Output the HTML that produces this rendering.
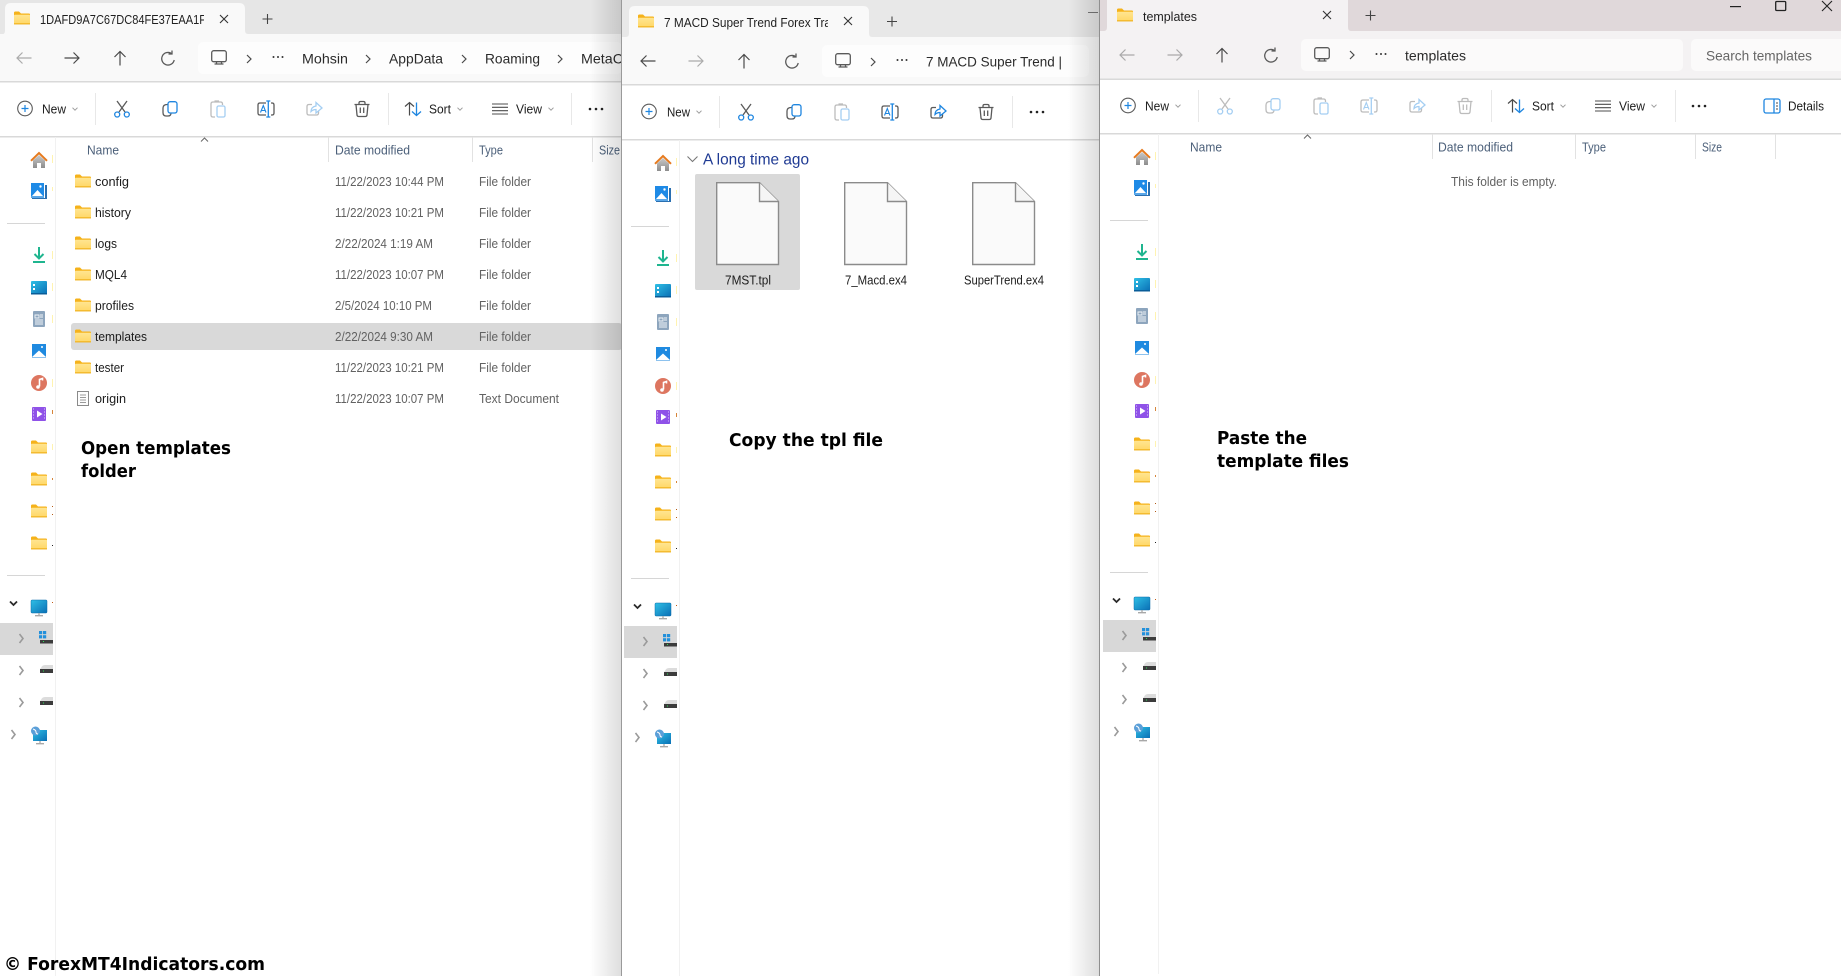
<!DOCTYPE html>
<html><head><meta charset="utf-8"><title>Explorer windows</title>
<style>
html,body{margin:0;padding:0;background:#fff;overflow:hidden}
svg{display:block}
text{font-family:"Liberation Sans",sans-serif;font-size:13px;fill:#1f1f1f}
.h{fill:#4c607a;font-size:12.5px}
.d{fill:#626262;font-size:12.5px}
.n{font-size:12.5px;fill:#1c1c1c}
.a{font-size:14px;fill:#2b2b2b}
.b{font-family:"DejaVu Sans",sans-serif;font-weight:bold;fill:#000;font-size:18px}
.s{fill:none;stroke:#4a4a4a;stroke-width:1.2}
.u{fill:none;stroke:#8a8a8a;stroke-width:1.2}
.bl{fill:none;stroke:#1f86e0;stroke-width:1.3}
.g{fill:none;stroke:#5a5a5a;stroke-width:1.3}
</style></head><body>
<svg width="1841" height="976" viewBox="0 0 1841 976" xmlns="http://www.w3.org/2000/svg">
<defs>
<linearGradient id="fd" x1="0" y1="0" x2="0" y2="1"><stop offset="0" stop-color="#ffe591"/><stop offset="1" stop-color="#ffd766"/></linearGradient>
<linearGradient id="sh" x1="0" y1="0" x2="1" y2="0"><stop offset="0" stop-color="#000" stop-opacity="0"/><stop offset="1" stop-color="#000" stop-opacity=".13"/></linearGradient>
<linearGradient id="sb" x1="0" y1="0" x2="1" y2="1"><stop offset="0" stop-color="#2fc0e6"/><stop offset="1" stop-color="#0a6fb5"/></linearGradient>
<linearGradient id="hb" x1="0" y1="0" x2="0" y2="1"><stop offset="0" stop-color="#c9c9c9"/><stop offset="1" stop-color="#8d8d8d"/></linearGradient>
<clipPath id="c1"><rect x="0" y="0" width="204" height="40"/></clipPath>
<clipPath id="c2"><rect x="620" y="0" width="208" height="40"/></clipPath>
<clipPath id="c3"><rect x="0" y="620" width="53" height="130"/></clipPath>

<g id="folder"><path d="M-8-3V-5.200q0-1.300 1.300-1.300H-3l2 2H7q1 0 1 1V-2H-8z" fill="#f5b21a"/><rect x="-8" y="-3.200" width="16" height="9.500" rx=".8" fill="url(#fd)"/><rect x="-8" y="5.300" width="16" height="1.100" fill="#efae18"/></g>

<g id="back"><path d="M7.500 0H-7M-1.500-5.500L-7 0l5.500 5.500" class="s"/></g>
<g id="backd"><path d="M7.500 0H-7M-1.500-5.500L-7 0l5.500 5.500" class="u" stroke-opacity=".7"/></g>
<g id="fwd"><path d="M-7.500 0H7M1.500-5.500L7 0l-5.500 5.500" class="s"/></g>
<g id="fwdd"><path d="M-7.500 0H7M1.500-5.500L7 0l-5.500 5.500" class="u" stroke-opacity=".7"/></g>
<g id="up"><path d="M0 7.500V-6.500M-5.500-1L0-6.500 5.500-1" class="s"/></g>
<g id="ref"><path d="M3.500-5.500A6.300 6.300 0 1 0 6.200 1M4-8.500v3.500H.5" class="g"/></g>
<g id="mon"><rect x="-7.300" y="-7.300" width="14.600" height="11" rx="2" class="g"/><path d="M-4.500 6h9M-2.500 4v2M2.500 4v2" class="g"/></g>
<g id="chev"><path d="M-2-4l4 4-4 4" class="s"/></g>
<g id="dots3"><circle cx="-4.500" r="1" fill="#333"/><circle r="1" fill="#333"/><circle cx="4.500" r="1" fill="#333"/></g>
<g id="more"><circle cx="-6" r="1.300" fill="#222"/><circle r="1.300" fill="#222"/><circle cx="6" r="1.300" fill="#222"/></g>
<g id="plus"><circle r="7.300" fill="none" stroke="#5a5a5a" stroke-width="1.100"/><path d="M-3.500 0h7M0-3.500v7" stroke="#1f86e0" stroke-width="1.200"/></g>
<g id="dn"><path d="M-2.500-1.300L0 1.200l2.500-2.500" fill="none" stroke="#9b9b9b" stroke-width="1"/></g>
<g id="cut"><path d="M-5-8L3 3M5-8L-3 3" class="g"/><circle cx="-4.800" cy="5.500" r="2.500" class="bl"/><circle cx="4.800" cy="5.500" r="2.500" class="bl"/></g>
<g id="copy"><path d="M-2.500-4.500Q-7-4.500-7-1v4.500q0 3.500 3 3.500h2q3 0 3-3" class="g"/><rect x="-2" y="-7.300" width="9" height="11.300" rx="2.200" class="bl"/></g>
<g id="paste"><path d="M-3 8h-2q-2 0-2-2V-5q0-2 2-2H2.500q2 0 2 2v1" class="g"/><path d="M-3.500-8h4.500" class="g"/><rect x="-1" y="-3" width="8" height="11" rx="1.500" class="bl"/></g>
<g id="ren"><path d="M0-6h-6q-2 0-2 2v8q0 2 2 2h6M5-6h1q2 0 2 2v8q0 2-2 2H5" class="g"/><path d="M2.300-8v16M.3-8h4M.3 8h4" class="bl"/><path d="M-5.500 3.500L-2.700-3.500 0 3.500M-4.700 1.500h4" stroke="#1f86e0" stroke-width="1.100" fill="none"/></g>
<g id="share"><path d="M-2-4.500h-3q-2 0-2 2V4q0 2 2 2h7.500q2 0 2-2V2" class="g"/><path d="M-3 2.500Q-3-2 2-3V-6.500L8-1 2 4V.5Q-1 .5-3 2.500z" class="bl"/></g>
<g id="del"><path d="M-7.500-4.500h15M-3-4.500V-6q0-1.500 1.500-1.500h3Q3-7.500 3-6v1.500M-6-4.500l1 10.500q.2 1.500 1.700 1.500h6.600q1.500 0 1.700-1.500l1-10.500M-1.700-1.500V4M1.700-1.500V4" class="g"/></g>
<g id="sort"><path d="M-3.500 6.500V-6.500M-8-2.500l4.500-4L1-2.500" class="s"/><path d="M3.500-6.500V6.500M-1 2.500l4.500 4 4.500-4" class="bl"/></g>
<g id="view"><path d="M-8-5h16M-8-1.700h16M-8 1.700h16M-8 5h16" stroke="#4d4d4d" stroke-width="1.100"/></g>
<g id="det"><rect x="-8" y="-7" width="16" height="14" rx="2" fill="none" stroke="#1f86e0" stroke-width="1.300"/><path d="M2-7V7" stroke="#1f86e0" stroke-width="1.300"/><path d="M4-3h2M4 0h2M4 3h2" stroke="#4a4a4a"/></g>

<g id="side">
<rect x="55" y="137" width="1" height="840" fill="#f1f1f1"/>
<rect x="0" y="623" width="53" height="32" fill="#d8d8d8"/>
<path d="M33 160.500l6-5.500 6 5.500V168h-4v-5h-4v5h-4z" fill="url(#hb)"/><path d="M31 160.800L39 153l8 7.800" fill="none" stroke="#e67a1e" stroke-width="2"/>
<rect x="31" y="183" width="13" height="13" fill="#1e8ae6"/><path d="M32 196l5.500-6 5.500 6z" fill="#fff"/><circle cx="40.500" cy="186.500" r="1.200" fill="#fff"/><rect x="31" y="196" width="13" height="2" fill="#5aa7e8"/><path d="M45 185h2v14H32v-1h13z" fill="#2a6fb0"/>
<rect x="7" y="223" width="38" height="1" fill="#d6d6d6"/>
<path d="M39 247v11M34.500 254l4.500 4.500 4.500-4.500M33 262h12" fill="none" stroke="#1fb58f" stroke-width="2"/>
<rect x="31" y="281" width="16" height="13" rx="1" fill="url(#sb)"/><rect x="33" y="284" width="2" height="2" fill="#fff"/><rect x="33" y="288" width="2" height="2" fill="#fff"/><rect x="31" y="293" width="16" height="1.500" fill="#0a5d98"/>
<rect x="33" y="311" width="12" height="16" rx="1" fill="#8da5bd"/><path d="M35 315h4v3h-4zM40 315h3M40 317h3M35 320h8M35 322h8M35 324h8" stroke="#f1f5f9" stroke-width=".9" fill="none"/>
<rect x="32" y="344" width="14" height="13" fill="#1f8ae0"/><path d="M32 357l7-6.500 7 6.500z" fill="#fff"/><circle cx="42" cy="347" r="1" fill="#fff"/><rect x="32" y="357" width="14" height="1" fill="#8dc2ee"/>
<circle cx="39" cy="383" r="8" fill="#dd7660"/><path d="M39.500 386.500v-7l3-1v2" stroke="#fff" stroke-width="1.600" fill="none"/><circle cx="38" cy="387" r="1.800" fill="#fff"/>
<rect x="32" y="407" width="14" height="14" rx="1" fill="#8f52e8"/><path d="M37 410.500v7l5.500-3.500z" fill="#fff"/><path d="M33 409h1M33 412h1M33 415h1M33 418h1M44 409h1M44 412h1M44 415h1M44 418h1" stroke="#fff" opacity=".7"/>
<use href="#folder" x="39" y="447"/><use href="#folder" x="39" y="479"/><use href="#folder" x="39" y="511"/><use href="#folder" x="39" y="543"/>
<rect x="7" y="575" width="38" height="1" fill="#d6d6d6"/>
<path d="M10 601.500l3.500 3.500 3.500-3.500" fill="none" stroke="#2a2a2a" stroke-width="1.800"/>
<rect x="31" y="600" width="16" height="13" rx="1" fill="url(#sb)" stroke="#0a6aa8" stroke-width=".5"/><path d="M39 613v2.500M35 615.700h8" stroke="#a8a8a8" stroke-width="1.300"/>
<path d="M19.500 634l3.500 4.500-3.500 4.500M19.500 666l3.500 4.500-3.500 4.500M19.500 698l3.500 4.500-3.500 4.500M11.500 730l3.500 4.500-3.500 4.500" fill="none" stroke="#9a9a9a" stroke-width="1.600"/>
<g clip-path="url(#c3)">
<rect x="39" y="631" width="3.200" height="3.200" fill="#2290db"/><rect x="43" y="631" width="3.200" height="3.200" fill="#2290db"/><rect x="39" y="635.200" width="3.200" height="3.200" fill="#2290db"/><rect x="43" y="635.200" width="3.200" height="3.200" fill="#2290db"/>
<rect x="40" y="640" width="16" height="3.500" fill="#3c3c3c"/><rect x="43" y="641" width="1" height="1" fill="#2ee05a"/>
<path d="M41 668q1-3 4-3h10v4H40z" fill="#dcdcdc"/><rect x="40" y="669" width="16" height="4" fill="#3c3c3c"/><rect x="43" y="670.500" width="1" height="1" fill="#2ee05a"/>
<path d="M41 700q1-3 4-3h10v4H40z" fill="#dcdcdc"/><rect x="40" y="701" width="16" height="4" fill="#3c3c3c"/><rect x="43" y="702.500" width="1" height="1" fill="#2ee05a"/>
</g>
<rect x="33" y="730" width="14" height="11" fill="url(#sb)"/><path d="M40 741v2.500M36 743.700h8" stroke="#a8a8a8" stroke-width="1.300"/><circle cx="35.500" cy="731" r="4.500" fill="#5b9fd8"/><path d="M33 729q3 1 3 3t2 2" stroke="#fff" fill="none"/>
<rect x="52" y="155" width="1" height="8" fill="#fff3b0"/><rect x="52" y="187" width="1" height="4" fill="#fff3b0"/><rect x="52" y="251" width="1" height="8" fill="#fff3b0"/><rect x="52" y="283" width="1" height="8" fill="#fff3b0"/><rect x="52" y="315" width="1" height="8" fill="#fff3b0"/><rect x="52" y="379" width="1" height="8" fill="#fff3b0"/><rect x="52" y="410" width="1" height="4" fill="#d6853a"/><rect x="52" y="444" width="1" height="6" fill="#fff3b0"/><rect x="52" y="478" width="1" height="2" fill="#d6853a"/><rect x="52" y="506" width="1" height="1" fill="#b35a14"/><rect x="52" y="514" width="1" height="1" fill="#b35a14"/><rect x="52" y="545" width="1" height="1" fill="#222"/><rect x="52" y="602" width="1" height="1" fill="#c25a14"/>
</g>

<g id="file"><path d="M0.700 0.700H43.500L62.500 19.500V82.500H0.700z" fill="#fafafa" stroke="#8b8b8b" stroke-width="1.400"/><path d="M43.500 0.700V19.500H62.500" fill="#f5f5f5" stroke="#8b8b8b" stroke-width="1.400"/></g>
</defs>

<!-- WINDOW 1 -->
<rect width="1841" height="976" fill="#fff"/>
<rect x="0" y="0" width="622" height="34" fill="#e6e6e6"/>
<path d="M3 34Q5 34 5 30V9Q5 3 11 3H239Q245 3 245 9V30Q245 34 248 34z" fill="#f9f9f9"/>
<use href="#folder" x="22" y="18"/>
<text x="40" y="24" textLength="166" lengthAdjust="spacingAndGlyphs" clip-path="url(#c1)">1DAFD9A7C67DC84FE37EAA1F</text>
<path d="M220 15l8 8M228 15l-8 8" stroke="#333" stroke-width="1.100"/>
<path d="M262.500 19h10M267.500 14v10" stroke="#444" stroke-width="1.100"/>
<rect x="0" y="34" width="622" height="47" fill="#f9f9f9"/>
<rect x="0" y="81" width="622" height="1.500" fill="#d9d9d9"/>
<rect x="198" y="42" width="424" height="32" rx="5" fill="#fdfdfd"/>
<use href="#backd" x="24" y="58"/><use href="#fwd" x="72" y="58"/><use href="#up" x="120" y="58"/><use href="#ref" x="168" y="59"/>
<use href="#mon" x="219" y="58"/><use href="#chev" x="249" y="59"/><use href="#dots3" x="278" y="57"/>
<text class="a" x="302" y="63.500" textLength="46" lengthAdjust="spacingAndGlyphs">Mohsin</text><use href="#chev" x="368" y="59"/>
<text class="a" x="389" y="63.500" textLength="54" lengthAdjust="spacingAndGlyphs">AppData</text><use href="#chev" x="464" y="59"/>
<text class="a" x="485" y="63.500" textLength="55" lengthAdjust="spacingAndGlyphs">Roaming</text><use href="#chev" x="560" y="59"/>
<text class="a" x="581" y="63.500" textLength="42" lengthAdjust="spacingAndGlyphs">MetaC</text>

<use href="#plus" x="25" y="108.500"/><text class="n" x="42" y="113.500" textLength="24" lengthAdjust="spacingAndGlyphs">New</text><use href="#dn" x="75" y="109"/>
<rect x="95" y="93" width="1" height="32" fill="#e8e8e8"/>
<use href="#cut" x="122" y="109"/><use href="#copy" x="170" y="109"/><use href="#paste" x="218" y="109" opacity=".4"/><use href="#ren" x="266" y="109"/><use href="#share" x="314" y="109" opacity=".4"/><use href="#del" x="362" y="109"/>
<rect x="388" y="93" width="1" height="32" fill="#e8e8e8"/>
<use href="#sort" x="413" y="109"/><text class="n" x="429" y="113.500" textLength="22" lengthAdjust="spacingAndGlyphs">Sort</text><use href="#dn" x="460" y="109"/>
<use href="#view" x="500" y="109"/><text class="n" x="516" y="113.500" textLength="26" lengthAdjust="spacingAndGlyphs">View</text><use href="#dn" x="551" y="109"/>
<rect x="571" y="93" width="1" height="32" fill="#e8e8e8"/><use href="#more" x="596" y="109"/>
<rect x="0" y="136" width="622" height="1.500" fill="#d9d9d9"/>

<rect x="71" y="323" width="551" height="27" rx="3" fill="#d9d9d9"/>
<use href="#side"/>
<path d="M201 141.500l3.500-3.500 3.500 3.500" fill="none" stroke="#666"/>
<text class="h" x="87" y="154.500" textLength="32" lengthAdjust="spacingAndGlyphs">Name</text>
<rect x="328" y="137" width="1" height="25" fill="#e2e2e2"/><text class="h" x="335" y="154.500" textLength="75" lengthAdjust="spacingAndGlyphs">Date modified</text>
<rect x="472" y="137" width="1" height="25" fill="#e2e2e2"/><text class="h" x="479" y="154.500" textLength="24" lengthAdjust="spacingAndGlyphs">Type</text>
<rect x="592" y="137" width="1" height="25" fill="#e2e2e2"/><text class="h" x="599" y="154.500" textLength="21" lengthAdjust="spacingAndGlyphs">Size</text>

<use href="#folder" x="83" y="181"/><text class="n" x="95" y="186" textLength="34" lengthAdjust="spacingAndGlyphs">config</text><text class="d" x="335" y="186" textLength="109" lengthAdjust="spacingAndGlyphs">11/22/2023 10:44 PM</text><text class="d" x="479" y="186" textLength="52" lengthAdjust="spacingAndGlyphs">File folder</text>
<use href="#folder" x="83" y="212"/><text class="n" x="95" y="217" textLength="36" lengthAdjust="spacingAndGlyphs">history</text><text class="d" x="335" y="217" textLength="109" lengthAdjust="spacingAndGlyphs">11/22/2023 10:21 PM</text><text class="d" x="479" y="217" textLength="52" lengthAdjust="spacingAndGlyphs">File folder</text>
<use href="#folder" x="83" y="243"/><text class="n" x="95" y="248" textLength="22" lengthAdjust="spacingAndGlyphs">logs</text><text class="d" x="335" y="248" textLength="98" lengthAdjust="spacingAndGlyphs">2/22/2024 1:19 AM</text><text class="d" x="479" y="248" textLength="52" lengthAdjust="spacingAndGlyphs">File folder</text>
<use href="#folder" x="83" y="274"/><text class="n" x="95" y="279" textLength="32" lengthAdjust="spacingAndGlyphs">MQL4</text><text class="d" x="335" y="279" textLength="109" lengthAdjust="spacingAndGlyphs">11/22/2023 10:07 PM</text><text class="d" x="479" y="279" textLength="52" lengthAdjust="spacingAndGlyphs">File folder</text>
<use href="#folder" x="83" y="305"/><text class="n" x="95" y="310" textLength="39" lengthAdjust="spacingAndGlyphs">profiles</text><text class="d" x="335" y="310" textLength="97" lengthAdjust="spacingAndGlyphs">2/5/2024 10:10 PM</text><text class="d" x="479" y="310" textLength="52" lengthAdjust="spacingAndGlyphs">File folder</text>
<use href="#folder" x="83" y="336"/><text class="n" x="95" y="341" textLength="52" lengthAdjust="spacingAndGlyphs">templates</text><text class="d" x="335" y="341" textLength="98" lengthAdjust="spacingAndGlyphs">2/22/2024 9:30 AM</text><text class="d" x="479" y="341" textLength="52" lengthAdjust="spacingAndGlyphs">File folder</text>
<use href="#folder" x="83" y="367"/><text class="n" x="95" y="372" textLength="29" lengthAdjust="spacingAndGlyphs">tester</text><text class="d" x="335" y="372" textLength="109" lengthAdjust="spacingAndGlyphs">11/22/2023 10:21 PM</text><text class="d" x="479" y="372" textLength="52" lengthAdjust="spacingAndGlyphs">File folder</text>
<rect x="77.500" y="391.500" width="11" height="14" fill="#fdfdfd" stroke="#8a8a8a"/><path d="M80 395h6M80 397.500h6M80 400h6M80 402.500h6" stroke="#9a9a9a"/>
<text class="n" x="95" y="403" textLength="31" lengthAdjust="spacingAndGlyphs">origin</text><text class="d" x="335" y="403" textLength="109" lengthAdjust="spacingAndGlyphs">11/22/2023 10:07 PM</text><text class="d" x="479" y="403" textLength="80" lengthAdjust="spacingAndGlyphs">Text Document</text>

<text class="b" x="81" y="454" textLength="150" lengthAdjust="spacingAndGlyphs">Open templates</text>
<text class="b" x="81" y="477" textLength="55" lengthAdjust="spacingAndGlyphs">folder</text>
<rect x="590" y="0" width="31" height="976" fill="url(#sh)"/>

<!-- WINDOW 2 -->
<rect x="621" y="0" width="479" height="976" fill="#fff"/>
<rect x="621" y="0" width="479" height="37" fill="#e8e8e8"/>
<path d="M626 37Q629 37 629 33V12Q629 6 635 6H863Q869 6 869 12V33Q869 37 872 37z" fill="#f9f9f9"/>
<use href="#folder" x="646" y="21"/>
<text x="664" y="27" textLength="167" lengthAdjust="spacingAndGlyphs" clip-path="url(#c2)">7 MACD Super Trend Forex Tra</text>
<path d="M844 17l8 8M852 17l-8 8" stroke="#333" stroke-width="1.100"/>
<path d="M887 21.500h10M892 16.500v10" stroke="#444" stroke-width="1.100"/>
<rect x="1088" y="12" width="10" height="1" fill="#777"/>
<rect x="621" y="37" width="479" height="47" fill="#f9f9f9"/>
<rect x="621" y="84" width="479" height="1.500" fill="#d9d9d9"/>
<rect x="822" y="45" width="267" height="32" rx="5" fill="#fdfdfd"/>
<use href="#back" x="648" y="61"/><use href="#fwdd" x="696" y="61"/><use href="#up" x="744" y="61"/><use href="#ref" x="792" y="62"/>
<use href="#mon" x="843" y="61"/><use href="#chev" x="873" y="62"/><use href="#dots3" x="902" y="60"/>
<text class="a" x="926" y="66.500" textLength="136" lengthAdjust="spacingAndGlyphs">7 MACD Super Trend |</text>
<use href="#plus" x="649" y="111.500"/><text class="n" x="667" y="116.500" textLength="23" lengthAdjust="spacingAndGlyphs">New</text><use href="#dn" x="699" y="112"/>
<rect x="719" y="96" width="1" height="32" fill="#e8e8e8"/>
<use href="#cut" x="746" y="112"/><use href="#copy" x="794" y="112"/><use href="#paste" x="842" y="112" opacity=".4"/><use href="#ren" x="890" y="112"/><use href="#share" x="938" y="112"/><use href="#del" x="986" y="112"/>
<rect x="1012" y="96" width="1" height="32" fill="#e8e8e8"/><use href="#more" x="1037" y="112"/>
<rect x="621" y="139" width="479" height="1.500" fill="#d9d9d9"/>
<use href="#side" transform="translate(624 3)"/>
<path d="M687.500 156.500l5 5 5-5" fill="none" stroke="#777" stroke-width="1.100"/>
<text x="703" y="164.500" style="font-size:16px;fill:#1f3a93" textLength="106" lengthAdjust="spacingAndGlyphs">A long time ago</text>
<rect x="695" y="174" width="105" height="116" rx="2" fill="#d9d9d9"/>
<use href="#file" x="716" y="182"/><use href="#file" x="844" y="182"/><use href="#file" x="972" y="182"/>
<text class="n" x="725" y="284.500" textLength="46" lengthAdjust="spacingAndGlyphs">7MST.tpl</text>
<text class="n" x="845" y="284.500" textLength="62" lengthAdjust="spacingAndGlyphs">7_Macd.ex4</text>
<text class="n" x="964" y="284.500" textLength="80" lengthAdjust="spacingAndGlyphs">SuperTrend.ex4</text>
<text class="b" x="729" y="446" textLength="154" lengthAdjust="spacingAndGlyphs">Copy the tpl file</text>
<rect x="1068" y="0" width="31" height="976" fill="url(#sh)"/>
<rect x="621" y="0" width="1" height="976" fill="#9a9a9a"/>
<rect x="1099" y="0" width="1" height="976" fill="#8f8f8f"/>

<!-- WINDOW 3 -->
<rect x="1100" y="0" width="741" height="976" fill="#fff"/>
<rect x="1100" y="0" width="741" height="31" fill="#e0d8da"/>
<path d="M1104 31Q1107 31 1107 27V0H1348V27Q1348 31 1351 31z" fill="#f4f2f3"/>
<use href="#folder" x="1125" y="15"/>
<text x="1143" y="21" textLength="54" lengthAdjust="spacingAndGlyphs">templates</text>
<path d="M1323 11l8 8M1331 11l-8 8" stroke="#333" stroke-width="1.100"/>
<path d="M1365.500 15.500h10M1370.500 10.500v10" stroke="#444" stroke-width="1.100"/>
<rect x="1730" y="6" width="11" height="1.200" fill="#222"/>
<rect x="1775.700" y="1.500" width="10" height="9" rx="1" fill="none" stroke="#222" stroke-width="1.300"/>
<path d="M1822 1l10 10M1832 1l-10 10" stroke="#222" stroke-width="1.100"/>
<rect x="1100" y="31" width="741" height="48" fill="#f4f2f3"/>
<rect x="1100" y="78.500" width="741" height="1.500" fill="#d9d9d9"/>
<rect x="1301" y="39" width="382" height="32" rx="5" fill="#fbfafa"/>
<rect x="1691" y="39" width="155" height="32" rx="5" fill="#fbfafa"/>
<use href="#backd" x="1127" y="55"/><use href="#fwdd" x="1175" y="55"/><use href="#up" x="1222" y="55"/><use href="#ref" x="1271" y="56"/>
<use href="#mon" x="1322" y="55"/><use href="#chev" x="1352" y="55"/><use href="#dots3" x="1381" y="54"/>
<text class="a" x="1405" y="60.500" textLength="61" lengthAdjust="spacingAndGlyphs">templates</text>
<text class="a" style="fill:#666" x="1706" y="60.500" textLength="106" lengthAdjust="spacingAndGlyphs">Search templates</text>
<use href="#plus" x="1128" y="105.500"/><text class="n" x="1145" y="110.500" textLength="24" lengthAdjust="spacingAndGlyphs">New</text><use href="#dn" x="1178" y="106"/>
<rect x="1198" y="90" width="1" height="32" fill="#e8e8e8"/>
<g opacity=".4"><use href="#cut" x="1225" y="106"/><use href="#copy" x="1273" y="106"/><use href="#paste" x="1321" y="106"/><use href="#ren" x="1369" y="106"/><use href="#share" x="1417" y="106"/><use href="#del" x="1465" y="106"/></g>
<rect x="1491" y="90" width="1" height="32" fill="#e8e8e8"/>
<use href="#sort" x="1516" y="106"/><text class="n" x="1532" y="110.500" textLength="22" lengthAdjust="spacingAndGlyphs">Sort</text><use href="#dn" x="1563" y="106"/>
<use href="#view" x="1603" y="106"/><text class="n" x="1619" y="110.500" textLength="26" lengthAdjust="spacingAndGlyphs">View</text><use href="#dn" x="1654" y="106"/>
<rect x="1675" y="90" width="1" height="32" fill="#e8e8e8"/><use href="#more" x="1699" y="106"/>
<use href="#det" x="1772" y="106"/><text class="n" x="1788" y="110.500" textLength="36" lengthAdjust="spacingAndGlyphs">Details</text>
<rect x="1100" y="133" width="741" height="1.500" fill="#d9d9d9"/>
<use href="#side" transform="translate(1103 -3)"/>
<path d="M1304 138.500l3.500-3.500 3.500 3.500" fill="none" stroke="#666"/>
<text class="h" x="1190" y="151.500" textLength="32" lengthAdjust="spacingAndGlyphs">Name</text>
<rect x="1432" y="134" width="1" height="25" fill="#e2e2e2"/><text class="h" x="1438" y="151.500" textLength="75" lengthAdjust="spacingAndGlyphs">Date modified</text>
<rect x="1575" y="134" width="1" height="25" fill="#e2e2e2"/><text class="h" x="1582" y="151.500" textLength="24" lengthAdjust="spacingAndGlyphs">Type</text>
<rect x="1695" y="134" width="1" height="25" fill="#e2e2e2"/><text class="h" x="1702" y="151.500" textLength="20" lengthAdjust="spacingAndGlyphs">Size</text>
<rect x="1775" y="134" width="1" height="25" fill="#e2e2e2"/>
<text class="d" x="1451" y="186" textLength="106" lengthAdjust="spacingAndGlyphs">This folder is empty.</text>
<text class="b" x="1217" y="444" textLength="90" lengthAdjust="spacingAndGlyphs">Paste the</text>
<text class="b" x="1217" y="467" textLength="132" lengthAdjust="spacingAndGlyphs">template files</text>

<text class="b" x="4" y="970" textLength="261" lengthAdjust="spacingAndGlyphs">© ForexMT4Indicators.com</text>
</svg>
</body></html>
